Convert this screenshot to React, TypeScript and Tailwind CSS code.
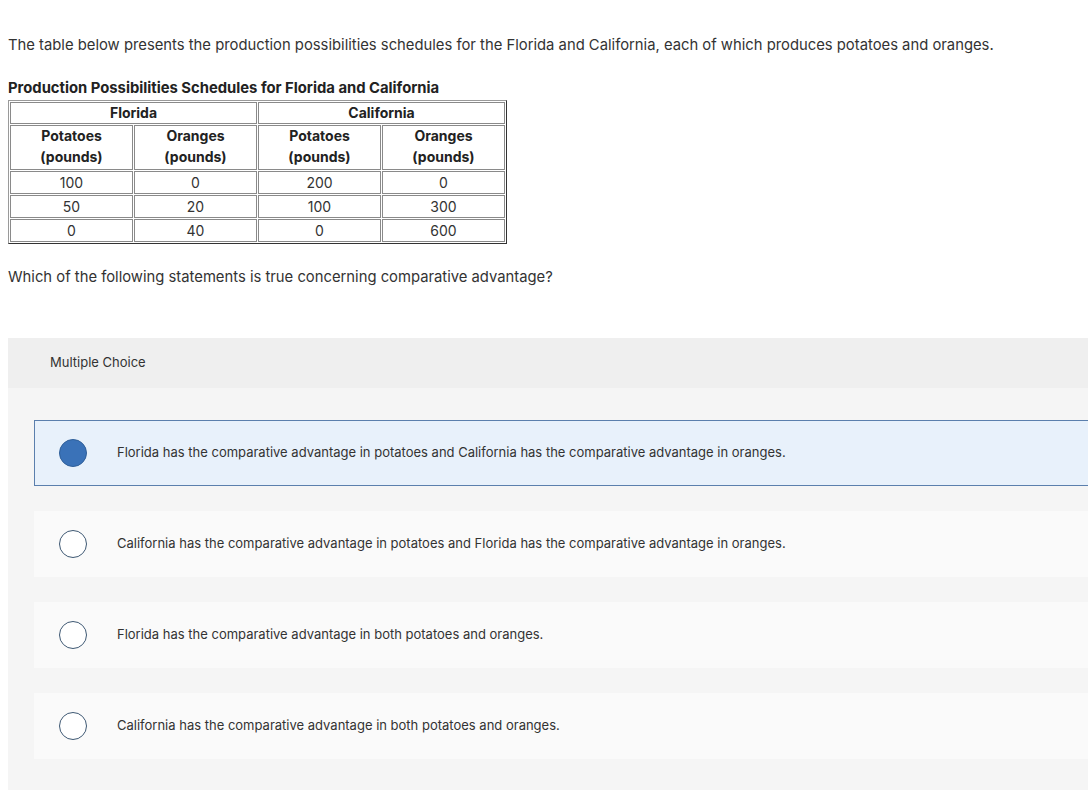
import React from 'react';

const rows = [
  ['100', '0', '200', '0'],
  ['50', '20', '100', '300'],
  ['0', '40', '0', '600'],
];

const options = [
  'Florida has the comparative advantage in potatoes and California has the comparative advantage in oranges.',
  'California has the comparative advantage in potatoes and Florida has the comparative advantage in oranges.',
  'Florida has the comparative advantage in both potatoes and oranges.',
  'California has the comparative advantage in both potatoes and oranges.',
];

const cell = 'border border-[#8a8a8a] p-0 text-center align-middle';

export default function App() {
  const selected = 0;

  return (
    <div className="min-h-[790px] overflow-hidden bg-white pl-2 pt-[35px] font-['Inter','Liberation_Sans',sans-serif] text-[#333]">
      <p className="text-[14.8px] leading-5">
        The table below presents the production possibilities schedules for the Florida and California, each of which produces potatoes and oranges.
      </p>

      <p className="mt-[23px] text-[14.8px] font-bold leading-5 text-[#222]">
        Production Possibilities Schedules for Florida and California
      </p>

      {/* Schedule table */}
      <table className="mt-[2px] w-[499px] table-fixed border-separate border-spacing-[1px] border border-t-[#9a9a9a] border-l-[#9a9a9a] border-r-[#333] border-b-[#333] text-[14px]">
        <thead>
          <tr className="h-[22px] font-semibold leading-5 text-[#222]">
            <th colSpan={2} className={cell}>Florida</th>
            <th colSpan={2} className={cell}>California</th>
          </tr>
          <tr className="h-[45px] font-semibold leading-[21px] text-[#222]">
            {['Potatoes', 'Oranges', 'Potatoes', 'Oranges'].map((h, i) => (
              <th key={i} className={cell}>
                <div className="-translate-y-[2px]">
                  {h}
                  <br />
                  (pounds)
                </div>
              </th>
            ))}
          </tr>
        </thead>
        <tbody>
          {rows.map((r, i) => (
            <tr key={i} className="h-[23px] leading-[21px]">
              {r.map((v, j) => (
                <td key={j} className={cell}>{v}</td>
              ))}
            </tr>
          ))}
        </tbody>
      </table>

      <p className="mt-[23px] text-[14.8px] leading-5">
        Which of the following statements is true concerning comparative advantage?
      </p>

      {/* Multiple choice panel */}
      <section className="mt-[51px] bg-[#f5f5f5] pb-8">
        <div className="flex h-[50px] items-center bg-[#efefef] pl-[42px] text-[13px]">
          Multiple Choice
        </div>
        <div className="flex flex-col gap-[25px] pl-[26px] pt-[32px]">
          {options.map((o, i) => (
            <div
              key={i}
              className={
                i === selected
                  ? 'flex h-[66px] items-center gap-[30px] border border-r-0 border-[#5b7fad] bg-[#e8f1fb] pl-6 text-[13px]'
                  : 'flex h-[66px] items-center gap-[30px] border border-r-0 border-transparent bg-[#fafafa] pl-6 text-[13px]'
              }
            >
              {i === selected ? (
                <span className="h-7 w-7 shrink-0 rounded-full border border-[#2f5f99] bg-[#3a72b8]" />
              ) : (
                <span className="h-7 w-7 shrink-0 rounded-full border-[1.5px] border-[#3e5873] bg-white" />
              )}
              <span>{o}</span>
            </div>
          ))}
        </div>
      </section>
    </div>
  );
}
